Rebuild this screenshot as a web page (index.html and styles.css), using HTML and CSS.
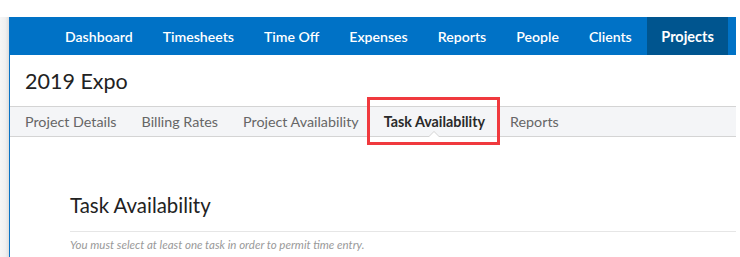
FILE: index.html
```html
<!DOCTYPE html>
<html>
<head>
<meta charset="utf-8">
<link rel="stylesheet" href="styles.css">
</head>
<body>
<div class="page">
  <div class="gutter"></div>
  <div class="frame">
    <nav class="topnav">
      <a class="nav-item">Dashboard</a>
      <a class="nav-item">Timesheets</a>
      <a class="nav-item">Time Off</a>
      <a class="nav-item">Expenses</a>
      <a class="nav-item">Reports</a>
      <a class="nav-item">People</a>
      <a class="nav-item">Clients</a>
      <a class="nav-item active">Projects</a>
    </nav>
    <h1 class="title">2019 Expo</h1>
    <div class="tabs">
      <a class="tab">Project Details</a>
      <a class="tab">Billing Rates</a>
      <a class="tab">Project Availability</a>
      <a class="tab active">Task Availability<span class="highlight"></span></a>
      <a class="tab">Reports</a>
    </div>
    <section class="panel">
      <h2 class="panel-title">Task Availability</h2>
      <p class="note">You must select at least one task in order to permit time entry.</p>
    </section>
  </div>
</div>
</body>
</html>
```
FILE: styles.css
```css
html, body {
  margin: 0;
  padding: 0;
  background: #ffffff;
  font-family: Lato, "Liberation Sans", sans-serif;
  overflow: hidden;
}
.page {
  display: flex;
  padding-top: 17px;
  height: 240px;
}
.gutter {
  width: 9px;
  flex: none;
  background: linear-gradient(to right, #f6f6f6, #f0f0f0 60%, #dedede);
}
.frame {
  width: 727px;
  flex: none;
  border-left: 1px solid #0a73c4;
  box-sizing: border-box;
}
.topnav {
  display: flex;
  height: 38px;
  background: #0072c6;
  padding-left: 40px;
}
.nav-item {
  display: flex;
  flex: none;
  align-items: center;
  white-space: nowrap;
  padding: 0 15px;
  color: #ffffff;
  font-size: 14.1px;
  font-weight: 600;
}
.nav-item.active {
  background: #00558f;
  font-weight: 700;
  font-size: 14.5px;
  padding: 0 14.5px;
}
.title {
  margin: 0;
  height: 51px;
  box-sizing: border-box;
  padding: 13px 0 0 15px;
  font-size: 21.5px;
  font-weight: 400;
  color: #222222;
}
.tabs {
  display: flex;
  height: 31px;
  box-sizing: border-box;
  background: #f4f5f7;
  border-top: 1px solid #d4d4d4;
  border-bottom: 1px solid #d4d4d4;
  padding-left: 2.5px;
}
.tab {
  position: relative;
  display: flex;
  flex: none;
  align-items: center;
  white-space: nowrap;
  padding: 0 12.5px;
  font-size: 14.3px;
  color: #666666;
}
.tab.active {
  color: #2a2a2a;
  font-weight: 700;
}
.tab.active::after {
  content: "";
  position: absolute;
  left: 50%;
  bottom: -1px;
  margin-left: -6px;
  width: 0;
  height: 0;
  border-left: 6px solid transparent;
  border-right: 6px solid transparent;
  border-bottom: 6px solid #d4d4d4;
}
.tab.active::before {
  content: "";
  position: absolute;
  left: 50%;
  bottom: -1px;
  margin-left: -5px;
  width: 0;
  height: 0;
  border-left: 5px solid transparent;
  border-right: 5px solid transparent;
  border-bottom: 5px solid #ffffff;
  z-index: 1;
}
.highlight {
  position: absolute;
  left: -4px;
  right: -2px;
  top: -10px;
  height: 42px;
  border: 3px solid #f0393e;
}
.panel {
  padding: 56px 0 0 60px;
}
.panel-title {
  margin: 0;
  font-size: 20.4px;
  font-weight: 400;
  color: #222222;
  padding-bottom: 14px;
  border-bottom: 1px solid #e6e6e6;
}
.note {
  margin: 6px 0 0 0;
  font-size: 11.5px;
  font-style: italic;
  color: #999999;
}
```
